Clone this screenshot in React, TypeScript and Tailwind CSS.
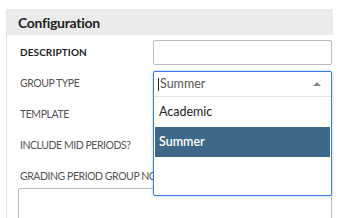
import React from "react";

function Row({ label, bold, children }: { label: string; bold?: boolean; children?: React.ReactNode }) {
  return (
    <div className="flex h-[31px] items-center">
      <div
        className={
          bold
            ? "w-[135px] pl-[2px] text-[10px] font-bold tracking-[0.1px] text-[#222]"
            : "w-[135px] pl-[2px] text-[10.5px] tracking-[-0.45px] text-[#555]"
        }
      >
        {label}
      </div>
      <div className="relative flex-1">{children}</div>
    </div>
  );
}

function OpenSelect() {
  return (
    <div className="relative h-[25px]">
      <div className="absolute left-0 right-0 top-0 z-10 h-[125px] rounded-[2px] border border-[#3b78f0] bg-white shadow-[0_0_3px_rgba(59,120,240,0.45)]">
        <div className="flex h-[25px] items-center border-b border-[#e3e3e3] pl-[4px] pr-[10px]">
          <span className="mr-[1px] h-[13px] w-px bg-[#222]" />
          <span className="flex-1 text-[12.5px] text-[#555]">Summer</span>
          <span className="h-0 w-0 border-x-[4px] border-b-[4px] border-x-transparent border-b-[#888]" />
        </div>
        <div className="flex h-[30px] items-center pl-[5px] text-[12.5px] text-[#222]">Academic</div>
        <div className="mx-px flex h-[30px] items-center bg-[#3e6889] pl-[4px] text-[12.5px] font-semibold text-white">
          Summer
        </div>
      </div>
    </div>
  );
}

export default function App() {
  return (
    <div className="h-[218px] w-[349px] overflow-hidden bg-white font-['Lato','Open_Sans',sans-serif]">
      <div className="ml-[6px] mt-[9px] w-[327px] border-l border-[#e6e6e6]">
        <div className="flex h-[26px] items-center bg-[#ebebeb] pl-[11px] text-[14px] font-bold tracking-[-0.3px] text-[#222]">
          Configuration
        </div>
        <div className="pl-[11px] pr-px pt-[2px]">
          <Row label="DESCRIPTION" bold>
            <div className="h-[25px] rounded-[2px] border border-[#bdbdbd] bg-white" />
          </Row>
          <Row label="GROUP TYPE">
            <OpenSelect />
          </Row>
          <Row label="TEMPLATE" />
          <Row label="INCLUDE MID PERIODS?" />
          <div className="whitespace-nowrap pl-[2px] pt-[7px] pb-[4px] text-[10.5px] leading-[16px] tracking-[-0.45px] text-[#555]">
            GRADING PERIOD GROUP NOTES
          </div>
          <div className="h-[60px] rounded-[2px] border border-[#bdbdbd]" />
        </div>
      </div>
    </div>
  );
}
